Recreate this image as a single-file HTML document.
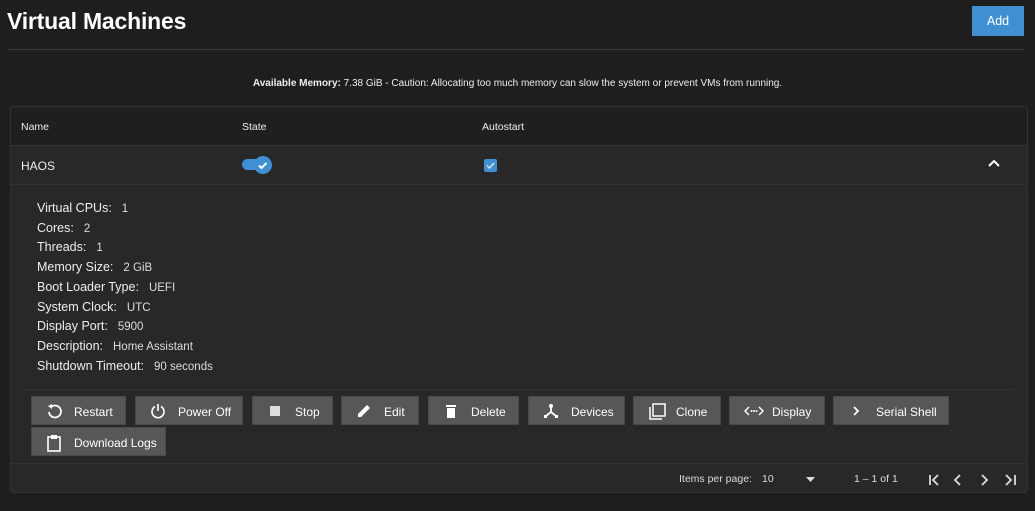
<!DOCTYPE html>
<html><head><style>
*{box-sizing:border-box;margin:0;padding:0}
body{width:1035px;height:511px;background:#1e1e1e;font-family:"Liberation Sans",sans-serif;color:#fff;position:relative;overflow:hidden}
.a{position:absolute}
h1{position:absolute;left:7px;top:8px;font-size:23px;font-weight:bold;letter-spacing:-0.2px}
.btn{position:absolute;height:29px;background:#575757;color:#fff;font-size:12px;display:flex;align-items:center;border:1px solid #4a4a4a}
.btn svg{position:absolute;left:14px;top:6px}
.btn span{position:absolute;left:42px;top:8px}
.lab{position:absolute;left:37px;font-size:12.5px;color:#eee}
.lab b{font-weight:normal;font-size:11.5px;margin-left:10px;color:#ddd}
</style></head><body>
<h1>Virtual Machines</h1>
<div class="a" style="left:972px;top:6px;width:52px;height:30px;background:#3f8fd2;font-size:12.5px;text-align:center;line-height:30px">Add</div>
<div class="a" style="left:7px;top:49px;width:1017px;height:1px;background:#3a3a3a"></div>
<div class="a" style="left:0;width:1035px;top:78px;text-align:center;font-size:10px;color:#eee"><b>Available Memory:</b> 7.38 GiB - Caution: Allocating too much memory can slow the system or prevent VMs from running.</div>
<div class="a" style="left:10px;top:106px;width:1018px;height:387px;border:1px solid #333;border-radius:4px;background:#282828;overflow:hidden">
 <div class="a" style="left:0;top:0;width:1018px;height:39px;background:#1f1f1f;border-bottom:1px solid #333;font-size:10.5px;color:#eee">
  <span class="a" style="left:10px;top:14px">Name</span><span class="a" style="left:231px;top:14px">State</span><span class="a" style="left:471px;top:14px">Autostart</span></div>
 <div class="a" style="left:0;top:39px;width:1018px;height:39px;border-bottom:1px solid #333">
  <span class="a" style="left:10px;top:13px;font-size:12px;color:#eee">HAOS</span>
  <div class="a" style="left:231px;top:13px;width:24px;height:11px;border-radius:6px;background:#3f8fd2"></div>
  <div class="a" style="left:243px;top:10px;width:18px;height:18px;border-radius:50%;background:#3f8fd2"><svg width="18" height="18"><path d="M5 9.5l2.5 2.5 5-5" stroke="#fff" stroke-width="2" fill="none"/></svg></div>
  <div class="a" style="left:473px;top:13px;width:13px;height:13px;background:#3f8fd2;border-radius:2px"><svg width="13" height="13"><path d="M3 6.5l2.5 2.5 4.5-5" stroke="#ddd" stroke-width="1.5" fill="none"/></svg></div>
  <svg class="a" style="left:976px;top:11px" width="14" height="14"><path d="M2 9l5-5 5 5" stroke="#fff" stroke-width="2" fill="none"/></svg>
 </div>
 <div class="a" style="left:10px;top:282px;width:994px;height:1px;background:#333"></div>
 <div class="a" style="left:0;top:356px;width:1018px;height:31px;border-top:1px solid #333;font-size:10.5px;color:#ddd">
  <span class="a" style="left:668px;top:9px">Items per page:</span><span class="a" style="left:751px;top:9px">10</span>
  <svg class="a" style="left:795px;top:13px" width="10" height="6"><path d="M0 0h9l-4.5 5z" fill="#ddd"/></svg>
  <span class="a" style="left:843px;top:9px">1 – 1 of 1</span>
  <svg class="a" style="left:916px;top:9px" width="90" height="14"><g stroke="#ddd" stroke-width="1.8" fill="none"><path d="M3 2v10M11 2l-5 5 5 5M33 2l-5 5 5 5M55 2l5 5-5 5M79 2l5 5-5 5M88 2v10"/></g></svg>
 </div>
</div>
<div class="lab" style="top:201px">Virtual CPUs:<b>1</b></div>
<div class="lab" style="top:221px">Cores:<b>2</b></div>
<div class="lab" style="top:240px">Threads:<b>1</b></div>
<div class="lab" style="top:260px">Memory Size:<b>2 GiB</b></div>
<div class="lab" style="top:280px">Boot Loader Type:<b>UEFI</b></div>
<div class="lab" style="top:300px">System Clock:<b>UTC</b></div>
<div class="lab" style="top:319px">Display Port:<b>5900</b></div>
<div class="lab" style="top:339px">Description:<b>Home Assistant</b></div>
<div class="lab" style="top:359px">Shutdown Timeout:<b>90 seconds</b></div>

<div class="btn" style="left:31px;top:396px;width:95px"><svg width="16" height="16"><path d="M5 4a6 6 0 1 1-2 5" stroke="#fff" stroke-width="1.8" fill="none"/><path d="M2 3l4-2v5z" fill="#fff"/></svg><span>Restart</span></div>
<div class="btn" style="left:135px;top:396px;width:108px"><svg width="16" height="16"><path d="M5 3.5a6 6 0 1 0 6 0M8 1v7" stroke="#fff" stroke-width="1.6" fill="none"/></svg><span>Power Off</span></div>
<div class="btn" style="left:252px;top:396px;width:81px"><svg width="16" height="16"><rect x="3" y="3" width="10" height="10" fill="#ddd"/></svg><span>Stop</span></div>
<div class="btn" style="left:341px;top:396px;width:78px"><svg width="16" height="16"><path d="M2 14v-3l9-9 3 3-9 9z" fill="#fff"/></svg><span>Edit</span></div>
<div class="btn" style="left:428px;top:396px;width:91px"><svg width="16" height="16"><path d="M3 2h10v2H3zM4 5h8v10H4z" fill="#fff"/></svg><span>Delete</span></div>
<div class="btn" style="left:528px;top:396px;width:97px"><svg width="16" height="16"><path d="M8 4v5l-5 4M8 9l5 4" stroke="#fff" stroke-width="1.8" fill="none"/><circle cx="8" cy="3" r="2" fill="#fff"/><rect x="1" y="12" width="3" height="3" fill="#fff"/><rect x="12" y="12" width="3" height="3" fill="#fff"/></svg><span>Devices</span></div>
<div class="btn" style="left:633px;top:396px;width:88px"><svg width="18" height="18"><path d="M2 4v12h12" stroke="#fff" stroke-width="1.5" fill="none"/><rect x="5" y="1" width="12" height="12" stroke="#fff" stroke-width="1.5" fill="none"/></svg><span>Clone</span></div>
<div class="btn" style="left:729px;top:396px;width:96px"><svg width="20" height="16"><path d="M5 4l-4 4 4 4M15 4l4 4-4 4" stroke="#fff" stroke-width="1.5" fill="none"/><circle cx="7.5" cy="8" r="1" fill="#fff"/><circle cx="10" cy="8" r="1" fill="#fff"/><circle cx="12.5" cy="8" r="1" fill="#fff"/></svg><span>Display</span></div>
<div class="btn" style="left:833px;top:396px;width:116px"><svg width="16" height="16"><path d="M6 4l4 4-4 4" stroke="#fff" stroke-width="1.8" fill="none"/></svg><span>Serial Shell</span></div>
<div class="btn" style="left:31px;top:427px;width:135px"><svg width="16" height="18"><rect x="2" y="3" width="12" height="14" stroke="#fff" stroke-width="1.6" fill="none"/><rect x="5" y="1" width="6" height="4" fill="#fff"/></svg><span>Download Logs</span></div>
</body></html>
